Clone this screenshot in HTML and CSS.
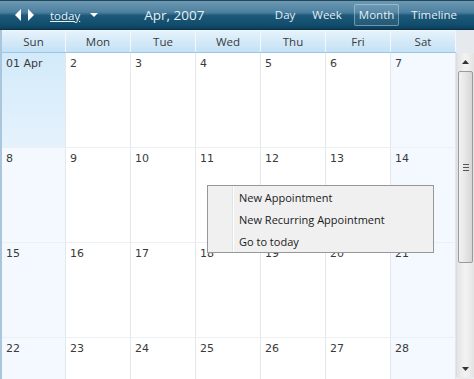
FILE: index.html
```html
<!DOCTYPE html>
<html>
<head>
<meta charset="utf-8">
<link rel="stylesheet" href="styles.css">
</head>
<body>
<div class="app">
  <div class="toolbar">
    <div class="nav">
      <svg class="arrows" width="22" height="12" viewBox="0 0 22 12"><polygon points="6,0 6,12 0,6" fill="#fff"/><polygon points="13,0 13,12 19,6" fill="#fff"/></svg>
    </div>
    <span class="today">today</span>
    <svg class="drop" width="8" height="4" viewBox="0 0 8 4"><polygon points="0,0 8,0 4,4" fill="#fff"/></svg>
    <span class="title">Apr, 2007</span>
    <div class="views">
      <span class="view">Day</span>
      <span class="view">Week</span>
      <span class="view active">Month</span>
      <span class="view">Timeline</span>
    </div>
  </div>
  <div class="body">
    <div class="calendar">
      <div class="dayheads">
        <div class="dh">Sun</div><div class="dh">Mon</div><div class="dh">Tue</div><div class="dh">Wed</div><div class="dh">Thu</div><div class="dh">Fri</div><div class="dh">Sat</div>
      </div>
      <div class="weeks">
        <div class="cell sun today-cell">01 Apr</div><div class="cell">2</div><div class="cell">3</div><div class="cell">4</div><div class="cell">5</div><div class="cell">6</div><div class="cell sat">7</div>
        <div class="cell sun">8</div><div class="cell">9</div><div class="cell">10</div><div class="cell">11</div><div class="cell">12</div><div class="cell">13</div><div class="cell sat">14</div>
        <div class="cell sun">15</div><div class="cell">16</div><div class="cell">17</div><div class="cell">18</div><div class="cell">19</div><div class="cell">20</div><div class="cell sat">21</div>
        <div class="cell sun">22</div><div class="cell">23</div><div class="cell">24</div><div class="cell">25</div><div class="cell">26</div><div class="cell">27</div><div class="cell sat">28</div>
      </div>
    </div>
    <div class="scrollside">
      <div class="corner"></div>
      <div class="scrollbar">
        <div class="sbtn"><svg width="7" height="4" viewBox="0 0 7 4"><polygon points="0,4 7,4 3.5,0" fill="#333"/></svg></div>
        <div class="track">
          <div class="thumb"><div class="grip"></div></div>
        </div>
        <div class="sbtn"><svg width="7" height="4" viewBox="0 0 7 4"><polygon points="0,0 7,0 3.5,4" fill="#333"/></svg></div>
      </div>
    </div>
  </div>
  <div class="menu">
    <div class="item">New Appointment</div>
    <div class="item">New Recurring Appointment</div>
    <div class="item">Go to today</div>
  </div>
</div>
</body>
</html>
```

FILE: styles.css
```css
html, body { margin: 0; padding: 0; background: #fff; }
.app {
  position: relative;
  width: 474px;
  height: 379px;
  overflow: hidden;
  font-family: "Open Sans", "Noto Sans", sans-serif;
}
.toolbar {
  height: 30px;
  box-sizing: border-box;
  display: flex;
  align-items: center;
  background: linear-gradient(#6d98b2 0%, #4d81a1 40%, #1d5878 52%, #114d6d 85%, #0d3f5a 100%);
  border-top: 1px solid #22465c;
  border-bottom: 1px solid #0a3046;
  color: #e4eff6;
  font-size: 11.5px;
}
.nav { width: 50px; padding-left: 15px; box-sizing: border-box; display: flex; align-items: center; }
.today { text-decoration: underline; color: #e8f2f8; font-size: 11.5px; }
.drop { margin-left: 10px; }
.title { margin-left: 46px; font-size: 13.5px; color: #e6f1f7; }
.views { margin-left: auto; display: flex; align-items: center; margin-right: 12px; }
.view { padding: 2px 4px 3px; border: 1px solid transparent; border-radius: 2px; margin-left: 7px; }
.view.active { border-color: rgba(200,225,240,0.45); background: rgba(255,255,255,0.08); }
.body { display: flex; height: 349px; }
.calendar {
  width: 456px;
  border-left: 2px solid #a9c6dc;
  box-sizing: border-box;
  border-bottom: 2px solid #a9c6dc;
}
.dayheads {
  display: grid;
  grid-template-columns: 64px repeat(6, 65px);
  height: 23px;
  border-top: 1px solid #f3f8fc;
  box-sizing: border-box;
  background: linear-gradient(#e6f2fb, #c3e1f6);
  border-bottom: 1px solid #9cc6e4;
}
.dh {
  font-size: 11.5px;
  color: #3a3a3a;
  text-align: center;
  line-height: 21px;
  border-right: 1px solid #f2f8fd;
}
.weeks {
  display: grid;
  grid-template-columns: 64px repeat(6, 65px);
  grid-template-rows: repeat(4, 95px);
}
.cell {
  font-family: "DejaVu Sans", sans-serif;
  font-size: 11px;
  color: #3a3a3a;
  padding: 4px 4px;
  border-right: 1px solid #e3e8ed;
  border-bottom: 1px solid #edf0f3;
  box-sizing: border-box;
  background: #fff;
}
.cell.sun, .cell.sat { background: #f3f9fe; }
.cell.today-cell { background: linear-gradient(#d3eafa, #e5f2fc); }
.scrollside { width: 18px; display: flex; flex-direction: column; background: #e9ebee; }
.corner { height: 23px; background: #e6e9ed; }
.scrollbar {
  flex: 1;
  display: flex;
  flex-direction: column;
  background: linear-gradient(90deg, #e3e3e3, #f3f3f3 50%, #e3e3e3);
  border-left: 1px solid #d8dde2;
  margin-bottom: 2px;
}
.sbtn { height: 17px; display: flex; align-items: center; justify-content: center; }
.track { flex: 1; padding: 1px 1px; }
.thumb {
  height: 192px;
  box-sizing: border-box;
  border: 1px solid #9b9b9b;
  border-radius: 2px;
  background: linear-gradient(90deg, #f2f2f2, #e6e6e6 50%, #d6d6d6);
  display: flex;
  align-items: center;
  justify-content: center;
}
.grip {
  width: 6px;
  height: 7px;
  background: repeating-linear-gradient(#555 0 1px, transparent 1px 3px);
}
.menu {
  position: absolute;
  left: 207px;
  top: 185px;
  width: 227px;
  height: 68px;
  box-sizing: border-box;
  border: 1px solid #979797;
  background: linear-gradient(90deg, #f0f0f0 0 24px, #e2e3e3 24px 25px, #fff 25px 26px, #f0f0f0 26px);
  padding: 1px 0;
  font-size: 11px;
  color: #1a1a1a;
}
.item { height: 22px; line-height: 22px; padding-left: 31px; }
```
